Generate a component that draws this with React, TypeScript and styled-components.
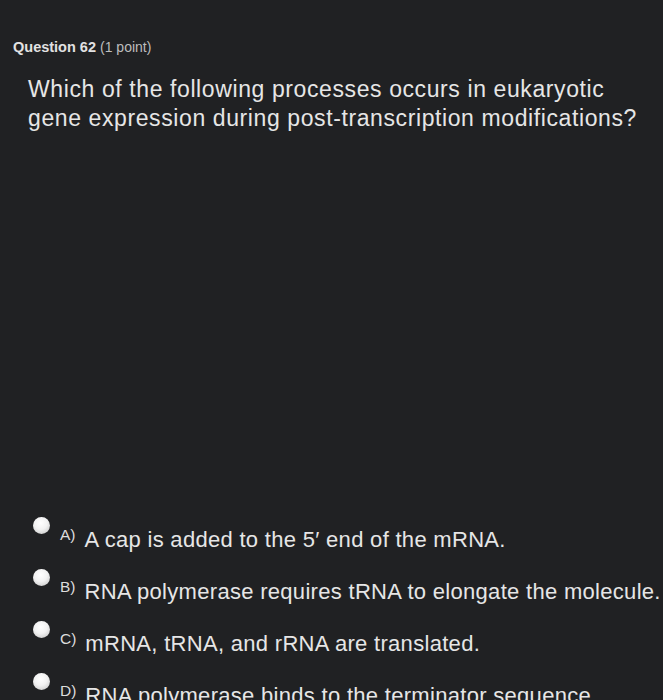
import React from 'react';
import styled, { createGlobalStyle } from 'styled-components';

const GlobalStyle = createGlobalStyle`
  html, body {
    margin: 0;
    padding: 0;
    background: #202123;
  }
  body {
    font-family: 'Liberation Sans', Arial, Helvetica, sans-serif;
    overflow: hidden;
  }
`;

const Page = styled.div`
  width: 663px;
  height: 700px;
  background: #202123;
  display: flex;
  flex-direction: column;
  overflow: hidden;
`;

const Header = styled.div`
  margin-top: 39px;
  padding-left: 13px;
  font-size: 14.5px;
  line-height: 17px;
  color: #d9d9d9;
`;

const Strong = styled.span`
  font-weight: bold;
  color: #e2e2e2;
`;

const Points = styled.span`
  color: #bdbdbd;
  font-size: 14px;
`;

const Question = styled.div`
  margin-top: 19px;
  padding-left: 28px;
  font-size: 23px;
  letter-spacing: 0.6px;
  line-height: 29px;
  color: #e6e6e6;
`;

const Options = styled.div`
  margin-top: 384px;
  display: flex;
  flex-direction: column;
`;

const Row = styled.div`
  display: flex;
  align-items: flex-start;
  height: 52px;
  padding-left: 33px;
  white-space: nowrap;
`;

const Radio = styled.span`
  flex: none;
  width: 17px;
  height: 17px;
  border-radius: 50%;
  background: radial-gradient(circle at 45% 35%, #ffffff 0%, #f2f2f2 45%, #bdbdbd 100%);
`;

const Letter = styled.span`
  margin-left: 10px;
  margin-top: 9px;
  font-size: 15.5px;
  line-height: 18px;
  color: #dcdcdc;
`;

const Answer = styled.span`
  margin-left: 9px;
  margin-top: 10px;
  font-size: 22px;
  letter-spacing: 0.3px;
  line-height: 25px;
  color: #e6e6e6;
`;

const options = [
  { letter: 'A)', text: 'A cap is added to the 5\u2032 end of the mRNA.' },
  { letter: 'B)', text: 'RNA polymerase requires tRNA to elongate the molecule.' },
  { letter: 'C)', text: 'mRNA, tRNA, and rRNA are translated.' },
  { letter: 'D)', text: 'RNA polymerase binds to the terminator sequence.' },
];

export default function App() {
  return (
    <>
      <GlobalStyle />
      <Page>
        <Header>
          <Strong>Question 62</Strong> <Points>(1 point)</Points>
        </Header>
        <Question>
          Which of the following processes occurs in eukaryotic
          <br />
          gene expression during post-transcription modifications?
        </Question>
        <Options>
          {options.map((o) => (
            <Row key={o.letter}>
              <Radio />
              <Letter>{o.letter}</Letter>
              <Answer>{o.text}</Answer>
            </Row>
          ))}
        </Options>
      </Page>
    </>
  );
}
